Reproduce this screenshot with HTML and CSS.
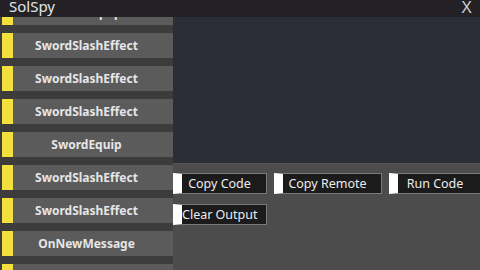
FILE: index.html
```html
<!DOCTYPE html>
<html>
<head>
<meta charset="utf-8">
<link rel="stylesheet" href="styles.css">
</head>
<body>
<div class="window">
  <header class="titlebar">
    <span class="title">SolSpy</span>
    <span class="close">X</span>
  </header>
  <div class="content">
    <aside class="remotes">
      <ul class="list">
        <li class="remote"><span class="flag"></span><span class="name">SwordEquip</span></li>
        <li class="remote"><span class="flag"></span><span class="name">SwordSlashEffect</span></li>
        <li class="remote"><span class="flag"></span><span class="name">SwordSlashEffect</span></li>
        <li class="remote"><span class="flag"></span><span class="name">SwordSlashEffect</span></li>
        <li class="remote"><span class="flag"></span><span class="name">SwordEquip</span></li>
        <li class="remote"><span class="flag"></span><span class="name">SwordSlashEffect</span></li>
        <li class="remote"><span class="flag"></span><span class="name">SwordSlashEffect</span></li>
        <li class="remote"><span class="flag"></span><span class="name">OnNewMessage</span></li>
        <li class="remote"><span class="flag"></span><span class="name">SwordSlashEffect</span></li>
      </ul>
    </aside>
    <main class="main">
      <div class="code"></div>
      <div class="actions">
        <button class="action">Copy Code</button>
        <button class="action">Copy Remote</button>
        <button class="action">Run Code</button>
        <button class="action">Clear Output</button>
      </div>
    </main>
  </div>
</div>
</body>
</html>
```
FILE: styles.css
```css
* { box-sizing: border-box; }
html, body {
  margin: 0;
  padding: 0;
  width: 480px;
  height: 270px;
  overflow: hidden;
  background: #2b2e36;
}
.window {
  width: 480px;
  height: 270px;
  display: flex;
  flex-direction: column;
  font-family: "Noto Sans", "Open Sans", sans-serif;
}
.titlebar {
  height: 17px;
  flex: none;
  background: #232125;
  display: flex;
  align-items: flex-start;
  justify-content: space-between;
  padding: 0 8px 0 9px;
  position: relative;
  z-index: 2;
}
.title {
  color: #e4e4e4;
  font-size: 15px;
  line-height: 14px;
  margin-top: -1px;
}
.close {
  color: #cfcfcf;
  font-family: "Liberation Sans", sans-serif;
  font-size: 16px;
  line-height: 15px;
  margin-top: 0px;
}
.content {
  flex: 1;
  display: grid;
  grid-template-columns: 173px 1fr;
  min-height: 0;
}
.remotes {
  background: #3c3c3d;
  overflow: hidden;
}
.list {
  list-style: none;
  margin: -17px 0 0 0;
  padding: 0;
  display: flex;
  flex-direction: column;
  gap: 8px;
}
.remote {
  height: 25px;
  display: grid;
  grid-template-columns: 2px 11px 1fr;
  background: #5b5b5c;
  position: relative;
}
.remote::before {
  content: "";
  background: #3c3c3d;
}
.flag {
  background: #f3e03c;
}
.name {
  position: absolute;
  inset: 0;
  display: flex;
  align-items: center;
  justify-content: center;
  color: #e6e6e6;
  font-weight: 700;
  font-size: 12px;
}
.main {
  display: flex;
  flex-direction: column;
  min-width: 0;
}
.code {
  height: 146px;
  flex: none;
  background: #2b2e36;
}
.actions {
  flex: 1;
  background: #4c4c4d;
  border-top: 1px solid #545455;
  padding-top: 9px;
  display: grid;
  grid-template-columns: 94px 108px 93px;
  grid-auto-rows: 21px;
  column-gap: 7px;
  row-gap: 10px;
  align-content: start;
  overflow: hidden;
}
.action {
  margin: 0;
  height: 21px;
  background: #1b1b1c;
  border: 1px solid #7a7a7a;
  border-left: 9px solid #ffffff;
  padding: 0 9px 0 0;
  color: #ececec;
  font-family: "Noto Sans", "Open Sans", sans-serif;
  font-size: 12.5px;
  line-height: 18px;
  text-align: center;
  white-space: nowrap;
}
```
